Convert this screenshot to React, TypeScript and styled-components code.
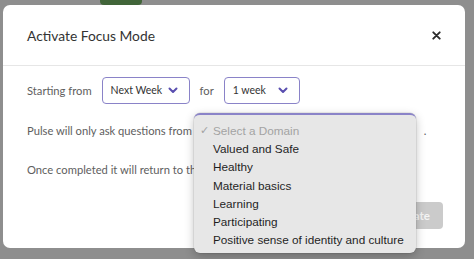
import { FC } from "react"
import styled, { createGlobalStyle } from "styled-components"

const Global = createGlobalStyle`
  html, body { margin: 0; padding: 0; }
  body {
    width: 474px;
    height: 259px;
    overflow: hidden;
    background: #f4f4f4;
    font-family: Lato, "Noto Sans", sans-serif;
  }
`

const Page = styled.div`
  position: relative;
  width: 474px;
  height: 259px;
  overflow: hidden;
  .topbar {
    display: flex;
    gap: 20px;
    padding-left: 100px;
    height: 5px;
    .go {
      width: 42px;
      height: 5px;
      border-radius: 0 0 4px 4px;
      background: #5aa34a;
    }
  }
`

const Backdrop = styled.div`
  position: absolute;
  inset: 0;
  background: rgba(40, 40, 40, 0.5);
`

const Modal = styled.div`
  position: absolute;
  left: 3px;
  top: 5px;
  width: 462px;
  height: 243px;
  background: #fff;
  border-radius: 7px;
  display: flex;
  flex-direction: column;
`

const Header = styled.div`
  height: 60px;
  padding: 0 24px 0 24px;
  display: flex;
  align-items: center;
  justify-content: space-between;
  border-bottom: 1px solid #e6e6e6;
  .title {
    font: 400 13.8px Lato, sans-serif;
    color: #333;
  }
`

const Body = styled.div`
  flex: 1;
  padding: 10px 24px 0 24px;
  display: flex;
  flex-direction: column;
  position: relative;
`

const Row = styled.div<{ $h: number }>`
  height: ${p => p.$h}px;
  display: flex;
  align-items: center;
  gap: 10px;
  font: 400 11.2px Lato, sans-serif;
  color: #5e5e5e;
  white-space: nowrap;
  span { flex-shrink: 0; }
`

const Select = styled.div<{ $w: number }>`
  box-sizing: border-box;
  flex-shrink: 0;
  width: ${p => p.$w}px;
  height: 27px;
  border: 1px solid #8a83c8;
  border-radius: 4px;
  padding: 0 11px 0 8px;
  display: flex;
  align-items: center;
  justify-content: space-between;
  color: #333;
  font: 400 10.5px Lato, sans-serif;
`

const Footer = styled.div`
  display: flex;
  justify-content: flex-end;
  padding: 0 22px 19px 0;
`

const Button = styled.div`
  height: 27px;
  padding: 0 13px 0 16px;
  border-radius: 4px;
  background: #cbcbcb;
  color: #f4f4f4;
  display: flex;
  align-items: center;
  font: 700 11.6px Lato, sans-serif;
`

const Menu = styled.div`
  position: absolute;
  left: 191px;
  top: 47px;
  width: 222px;
  padding: 6px 0 4px 0;
  background: #e7e7e7;
  border-radius: 6px;
  box-shadow: 0 3px 10px rgba(0, 0, 0, 0.25), 0 0 0 0.5px rgba(0, 0, 0, 0.12);
  border-top: 2px solid #8a83c8;
  font: 400 11.75px "Liberation Sans", Arial, sans-serif;
  color: #1f1f1f;
`

const Option = styled.div<{ $placeholder?: boolean }>`
  height: 18.3px;
  display: flex;
  align-items: center;
  padding-left: 19px;
  position: relative;
  white-space: nowrap;
  color: ${p => (p.$placeholder ? "#a3a3a3" : "#1f1f1f")};
  .check {
    position: absolute;
    left: 6px;
    font-size: 11px;
  }
`

const Chevron: FC = () => (
  <svg width="10" height="7" viewBox="0 0 10 7">
    <path d="M1.5 1.5 L5 5 L8.5 1.5" fill="none" stroke="#5a4fb0" strokeWidth="2" strokeLinecap="round" strokeLinejoin="round" />
  </svg>
)

const Close: FC = () => (
  <svg width="9" height="9" viewBox="0 0 9 9">
    <path d="M1.3 1.3 L7.7 7.7 M7.7 1.3 L1.3 7.7" stroke="#2b2b2b" strokeWidth="1.9" strokeLinecap="round" />
  </svg>
)

const domains = [
  "Valued and Safe",
  "Healthy",
  "Material basics",
  "Learning",
  "Participating",
  "Positive sense of identity and culture",
]

export default function App() {
  return (
    <Page>
      <Global />
      <div className="topbar">
        <div className="go" />
      </div>
      <Backdrop />
      <Modal>
        <Header>
          <div className="title">Activate Focus Mode</div>
          <Close />
        </Header>
        <Body>
          <Row $h={28}>
            <span>Starting from</span>
            <Select $w={88}>
              <span>Next Week</span>
              <Chevron />
            </Select>
            <span>for</span>
            <Select $w={76}>
              <span>1 week</span>
              <Chevron />
            </Select>
          </Row>
          <Row $h={52}>
            <span>Pulse will only ask questions from</span>
            <Select $w={212}>
              <span />
            </Select>
            <span>.</span>
          </Row>
          <Row $h={26}>
            <span>Once completed it will return to the normal</span>
          </Row>
          <Menu>
            <Option $placeholder>
              <span className="check">✓</span>Select a Domain
            </Option>
            {domains.map(d => (
              <Option key={d}>{d}</Option>
            ))}
          </Menu>
        </Body>
        <Footer>
          <Button>Activate</Button>
        </Footer>
      </Modal>
    </Page>
  )
}
